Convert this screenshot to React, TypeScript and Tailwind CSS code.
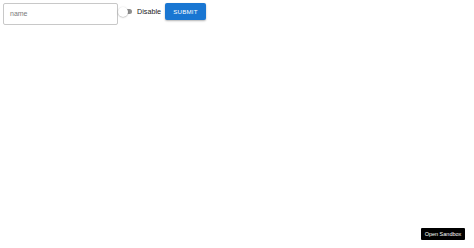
import React from "react";

const App: React.FC = () => {
  return (
    <div className="relative h-[248px] w-[474px] bg-white font-['Liberation_Sans',_Arial,_sans-serif]">
      <div className="flex items-start pl-[3px] pt-[3px]">
        <div className="flex h-[22px] w-[115px] items-center rounded-[2px] border border-[#c8c8c8] px-[6px]">
          <span className="text-[7px] text-[#7a7a7a]">name</span>
        </div>
        <div className="mt-[3px] flex h-[10px] items-center">
          <div className="relative mt-[1px] h-[10px] w-[16px]">
            <div className="absolute left-[3px] top-[2.5px] h-[5px] w-[11px] rounded-full bg-[#8f8f8f]" />
            <div className="absolute left-0 top-0 h-[10px] w-[10px] rounded-full bg-white shadow-[0_0.5px_1.5px_rgba(0,0,0,0.35)]" />
          </div>
          <span className="ml-[3px] mt-[2px] text-[7.2px] text-[#1a1a1a]">Disable</span>
        </div>
        <button className="ml-[4px] h-[17px] w-[41px] rounded-[2px] bg-[#1976d2] text-[6.2px] font-medium tracking-[0.2px] text-white shadow-[0_1px_2px_rgba(0,0,0,0.3)]">
          SUBMIT
        </button>
      </div>
      <div className="absolute bottom-[8px] right-[9px] flex h-[12px] w-[44px] items-center justify-center rounded-[1px] bg-black">
        <span className="text-[5.5px] text-white">Open Sandbox</span>
      </div>
    </div>
  );
};

export default App;
